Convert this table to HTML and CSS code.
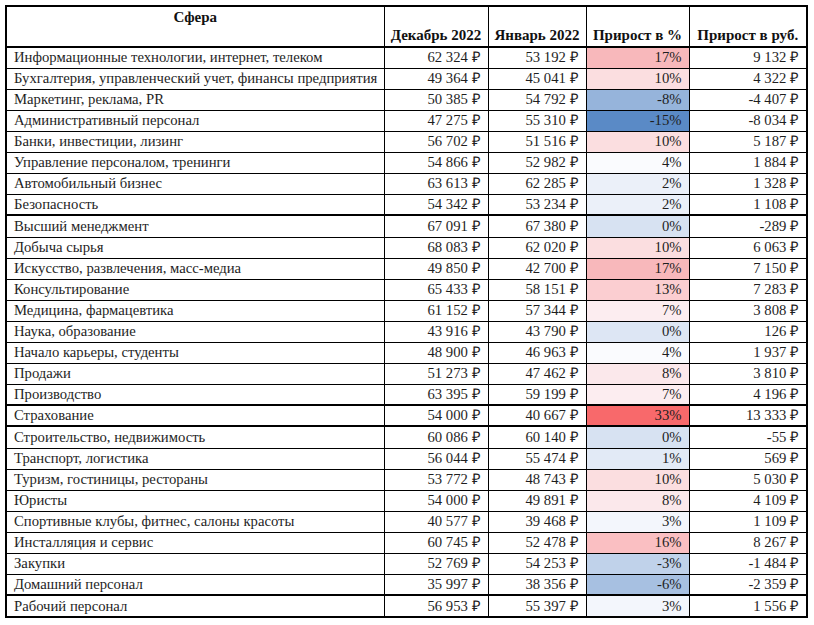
FILE: index.html
```html
<!DOCTYPE html>
<html lang="ru">
<head>
<meta charset="utf-8">
<link rel="stylesheet" href="styles.css">
</head>
<body>
<div class="wrap">
<table class="grid">
<colgroup><col class="c1"><col class="c2"><col class="c3"><col class="c4"><col class="c5"></colgroup>
<thead>
<tr class="head"><th class="h-top">Сфера</th><th>Декабрь 2022</th><th>Январь 2022</th><th>Прирост в %</th><th>Прирост в руб.</th></tr>
</thead>
<tbody>
<tr><td>Информационные технологии, интернет, телеком</td><td>62&nbsp;324&nbsp;₽</td><td>53&nbsp;192&nbsp;₽</td><td class="p17">17%</td><td>9&nbsp;132&nbsp;₽</td></tr>
<tr><td>Бухгалтерия, управленческий учет, финансы предприятия</td><td>49&nbsp;364&nbsp;₽</td><td>45&nbsp;041&nbsp;₽</td><td class="p10">10%</td><td>4&nbsp;322&nbsp;₽</td></tr>
<tr><td>Маркетинг, реклама, PR</td><td>50&nbsp;385&nbsp;₽</td><td>54&nbsp;792&nbsp;₽</td><td class="m8">-8%</td><td>-4&nbsp;407&nbsp;₽</td></tr>
<tr><td>Административный персонал</td><td>47&nbsp;275&nbsp;₽</td><td>55&nbsp;310&nbsp;₽</td><td class="m15">-15%</td><td>-8&nbsp;034&nbsp;₽</td></tr>
<tr><td>Банки, инвестиции, лизинг</td><td>56&nbsp;702&nbsp;₽</td><td>51&nbsp;516&nbsp;₽</td><td class="p10">10%</td><td>5&nbsp;187&nbsp;₽</td></tr>
<tr><td>Управление персоналом, тренинги</td><td>54&nbsp;866&nbsp;₽</td><td>52&nbsp;982&nbsp;₽</td><td class="p4">4%</td><td>1&nbsp;884&nbsp;₽</td></tr>
<tr><td>Автомобильный бизнес</td><td>63&nbsp;613&nbsp;₽</td><td>62&nbsp;285&nbsp;₽</td><td class="p2">2%</td><td>1&nbsp;328&nbsp;₽</td></tr>
<tr><td>Безопасность</td><td>54&nbsp;342&nbsp;₽</td><td>53&nbsp;234&nbsp;₽</td><td class="p2">2%</td><td>1&nbsp;108&nbsp;₽</td></tr>
<tr class="thick tall"><td>Высший менеджмент</td><td>67&nbsp;091&nbsp;₽</td><td>67&nbsp;380&nbsp;₽</td><td class="p0">0%</td><td>-289&nbsp;₽</td></tr>
<tr><td>Добыча сырья</td><td>68&nbsp;083&nbsp;₽</td><td>62&nbsp;020&nbsp;₽</td><td class="p10">10%</td><td>6&nbsp;063&nbsp;₽</td></tr>
<tr><td>Искусство, развлечения, масс-медиа</td><td>49&nbsp;850&nbsp;₽</td><td>42&nbsp;700&nbsp;₽</td><td class="p17">17%</td><td>7&nbsp;150&nbsp;₽</td></tr>
<tr><td>Консультирование</td><td>65&nbsp;433&nbsp;₽</td><td>58&nbsp;151&nbsp;₽</td><td class="p13">13%</td><td>7&nbsp;283&nbsp;₽</td></tr>
<tr><td>Медицина, фармацевтика</td><td>61&nbsp;152&nbsp;₽</td><td>57&nbsp;344&nbsp;₽</td><td class="p7">7%</td><td>3&nbsp;808&nbsp;₽</td></tr>
<tr><td>Наука, образование</td><td>43&nbsp;916&nbsp;₽</td><td>43&nbsp;790&nbsp;₽</td><td class="p0b">0%</td><td>126&nbsp;₽</td></tr>
<tr><td>Начало карьеры, студенты</td><td>48&nbsp;900&nbsp;₽</td><td>46&nbsp;963&nbsp;₽</td><td class="p4">4%</td><td>1&nbsp;937&nbsp;₽</td></tr>
<tr><td>Продажи</td><td>51&nbsp;273&nbsp;₽</td><td>47&nbsp;462&nbsp;₽</td><td class="p8">8%</td><td>3&nbsp;810&nbsp;₽</td></tr>
<tr><td>Производство</td><td>63&nbsp;395&nbsp;₽</td><td>59&nbsp;199&nbsp;₽</td><td class="p7">7%</td><td>4&nbsp;196&nbsp;₽</td></tr>
<tr class="thick"><td>Страхование</td><td>54&nbsp;000&nbsp;₽</td><td>40&nbsp;667&nbsp;₽</td><td class="p33">33%</td><td>13&nbsp;333&nbsp;₽</td></tr>
<tr class="thick tall"><td>Строительство, недвижимость</td><td>60&nbsp;086&nbsp;₽</td><td>60&nbsp;140&nbsp;₽</td><td class="p0">0%</td><td>-55&nbsp;₽</td></tr>
<tr><td>Транспорт, логистика</td><td>56&nbsp;044&nbsp;₽</td><td>55&nbsp;474&nbsp;₽</td><td class="p1">1%</td><td>569&nbsp;₽</td></tr>
<tr><td>Туризм, гостиницы, рестораны</td><td>53&nbsp;772&nbsp;₽</td><td>48&nbsp;743&nbsp;₽</td><td class="p10">10%</td><td>5&nbsp;030&nbsp;₽</td></tr>
<tr><td>Юристы</td><td>54&nbsp;000&nbsp;₽</td><td>49&nbsp;891&nbsp;₽</td><td class="p8">8%</td><td>4&nbsp;109&nbsp;₽</td></tr>
<tr><td>Спортивные клубы, фитнес, салоны красоты</td><td>40&nbsp;577&nbsp;₽</td><td>39&nbsp;468&nbsp;₽</td><td class="p3">3%</td><td>1&nbsp;109&nbsp;₽</td></tr>
<tr><td>Инсталляция и сервис</td><td>60&nbsp;745&nbsp;₽</td><td>52&nbsp;478&nbsp;₽</td><td class="p16">16%</td><td>8&nbsp;267&nbsp;₽</td></tr>
<tr><td>Закупки</td><td>52&nbsp;769&nbsp;₽</td><td>54&nbsp;253&nbsp;₽</td><td class="m3">-3%</td><td>-1&nbsp;484&nbsp;₽</td></tr>
<tr><td>Домашний персонал</td><td>35&nbsp;997&nbsp;₽</td><td>38&nbsp;356&nbsp;₽</td><td class="m6">-6%</td><td>-2&nbsp;359&nbsp;₽</td></tr>
<tr class="thick tall"><td>Рабочий персонал</td><td>56&nbsp;953&nbsp;₽</td><td>55&nbsp;397&nbsp;₽</td><td class="p3">3%</td><td>1&nbsp;556&nbsp;₽</td></tr>
</tbody>
</table>
</div>
</body>
</html>
```

FILE: styles.css
```css
html, body {
  margin: 0;
  padding: 0;
  background: #fff;
  font-family: "Liberation Serif", "Times New Roman", serif;
}
.wrap {
  padding: 5px 0 0 5px;
}
.grid {
  border-collapse: collapse;
  table-layout: fixed;
  width: 801px;
  border: 2px solid #000;
  font-family: "Liberation Serif", "Times New Roman", serif;
  font-size: 14.7px;
  color: #1e1e1e;
}
.c1 { width: 378px; }
.c2 { width: 104px; }
.c3 { width: 98px; }
.c4 { width: 103px; }
.c5 { width: 118px; }
.grid tr.head {
  height: 41px;
}
.grid th {
  border: 1px solid #000;
  border-bottom: 2px solid #000;
  font-weight: bold;
  font-size: 15px;
  text-align: center;
  vertical-align: bottom;
  padding: 0 2px 2px;
  line-height: 17px;
  color: #111;
}
.grid th.h-top {
  vertical-align: top;
  padding-top: 2px;
}
.grid tbody tr {
  height: 21px;
}
.grid tbody tr.tall {
  height: 22px;
}
.grid td {
  border: 1px solid #000;
  padding: 0 7px 0 7px;
  text-align: right;
  white-space: nowrap;
  line-height: 17px;
}
.grid td:first-child {
  text-align: left;
}
.grid tr.thick td {
  border-top: 2px solid #000;
}
.m15 { background: #5a8ac6; }
.m8  { background: #96b4db; }
.m6  { background: #a7c0e1; }
.m3  { background: #c0d2ea; }
.p0  { background: #d7e2f2; }
.p0b { background: #dde6f4; }
.p1  { background: #e2eaf6; }
.p2  { background: #ebf0f9; }
.p3  { background: #f3f6fc; }
.p4  { background: #fafbfe; }
.p7  { background: #fcedf0; }
.p8  { background: #fbe8eb; }
.p10 { background: #fbdee0; }
.p13 { background: #fbced1; }
.p16 { background: #fabfc2; }
.p17 { background: #f8b8bb; }
.p33 { background: #f8696b; }
```
